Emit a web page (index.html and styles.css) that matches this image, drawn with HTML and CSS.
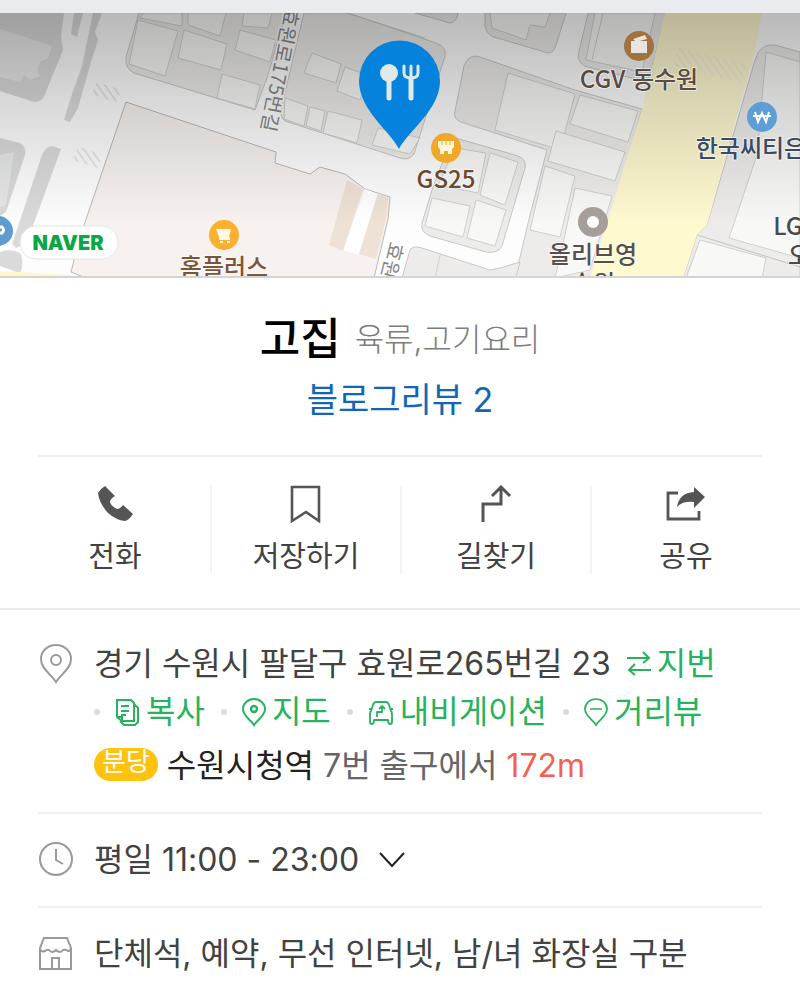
FILE: index.html
```html
<!doctype html>
<html lang="ko">
<head>
  <meta charset="utf-8" />
  <meta name="viewport" content="width=device-width,initial-scale=1" />
  <title>고집 - 장소 정보</title>
  <link rel="stylesheet" href="styles.css">
</head>

<body>
  <div class="topbar"></div>

  <div class="map">
    <svg viewBox="0 13 800 265" role="img" aria-label="고집 주변 지도">
      <defs>
        <linearGradient id="shade" x1="0" y1="0" x2="0" y2="1">
          <stop offset="0" stop-color="#000" stop-opacity=".27" />
          <stop offset=".35" stop-color="#000" stop-opacity=".14" />
          <stop offset=".8" stop-color="#000" stop-opacity="0" />
        </linearGradient>
        <pattern id="walk" width="6" height="6" patternUnits="userSpaceOnUse" patternTransform="rotate(-35)">
          <path d="M0 0V6" stroke="#e6e8e7" stroke-width="4" />
        </pattern>
      </defs>
      <rect y="13" width="800" height="265" fill="#fdfdfd" />

      <!-- 왼쪽 블록, 중앙분리대 -->
      <g fill="#dadada">
        <path d="M0 13H64L61 36L63 50L45 94Q42 103 34 102L0 91Z" />
        <path d="M74 13H83L77 37L71 34Z" />
        <path d="M93 13H102L95 32L98 40L91 62L78 108L70 122L64 120L71 97L82 66Z" />
        <path d="M0 138L20 143Q27 147 25 155L6 212L0 216Z" />
        <path d="M42 155Q45 147 52 146L61 149L27 242L16 248L12 244Z" />
        <path d="M0 252Q10 248 20 253Q25 262 20 273L0 266Z" />
      </g>
      <path d="M0 29L52 46L48 58L40 62L37 70L40 76L30 80L24 75L20 82L0 77Z" fill="#e9e9e9" />
      <path d="M0 155L14 152L6 205L0 207Z" fill="#e6e7e7" />
      <path d="M0 271L70 275L76 278H0Z" fill="#fff7ca" />
      <path d="M97 82L122 90L116 103L92 94ZM78 146L102 155L98 168L73 160Z" fill="url(#walk)" />

      <!-- 홈플러스 부지 -->
      <path d="M126 102L276 152L275 163L310 174L320 167L345 174L365 189L390 197L388 219L374 278H86L71 272L80 237Z" fill="#f7f2ef" stroke="#bbb8b6" />
      <path d="M365 189L378 194L359 255L343 250Z" fill="#fff" />
      <path d="M347 180L363 189L343 251L329 245ZM378 193L388 197L387 215L376 259L359 254Z" fill="#eee1d5" />

      <!-- 주거 블록 -->
      <g fill="#edecea" stroke="#c8c8c6">
        <path d="M139 13L126 57Q125 69 134 73L255 110L268 75L286 13Z" />
        <path d="M304 13H348L436 43Q447 47 445 56L414 154Q409 161 400 158L285 121Q279 117 282 105Z" />
        <path d="M415 13L450 23Q457 22 458 13Z" />
        <path d="M485 13V26Q487 35 494 37L548 53Q554 53 556 45L566 13Z" />
        <path d="M588 13L578 56Q579 64 587 67L648 82L666 13Z" />
        <path d="M480 57L575 90L642 109L594 278H515L530 215L547 150L461 122Q453 119 455 111L464 66Q469 53 480 57Z" />
        <path d="M452 137L515 155Q527 158 525 168L502 246Q498 254 486 252L430 236Q420 232 422 223L432 190Z" />
        <path d="M410 250Q413 245 422 248L490 270L500 268L520 262L516 278H402Z" />
        <path d="M755 60Q760 43 775 45L800 52V267L697 235L707 225Z" />
        <path d="M697 235L800 267V278H683Z" />
      </g>
      <g fill="#f8f8f7" stroke="#d0d0ce">
        <path d="M138 20L178 31L165 76L129 64Z" />
        <path d="M144 13H182V26L140 18ZM188 13H226L220 36L188 25ZM244 13H272L268 28L242 26Z" />
        <path d="M184 30L227 44L221 70L178 58ZM240 30L276 40L270 62L235 50ZM222 74L260 85L255 109L217 98Z" />
        <path d="M312 53L341 64L336 83L304 73ZM345 67L370 76L360 100L337 91Z" />
        <path d="M285 98L308 106L304 126L284 119ZM310 107L325 111L321 131L306 126ZM328 111L362 120L357 143L323 133Z" />
        <path d="M378 128L420 138L410 154L372 145Z" />
        <path d="M508 73L575 94L560 150L495 130Z" />
        <path d="M490 13H550L545 27L530 25L526 40L492 28Z" />
        <path d="M595 13H655L642 72L586 60Z" />
        <path d="M580 95L638 111L628 142L570 124ZM556 131L625 152L615 181L548 161Z" />
        <path d="M545 166L575 176L560 237L530 230ZM575 188L612 196L590 270L555 278L565 235Z" />
        <path d="M490 153L518 162L505 205L480 195ZM455 148L486 153L478 193L438 185ZM432 198L470 206L463 237L425 226ZM476 200L506 210L495 246L467 238Z" />
        <path d="M766 52L800 62V258L729 238L757 155Z" />
        <path d="M700 240L766 258L762 278H686Z" />
      </g>
      <path d="M347 13L425 38M440 255L435 278M603 13L592 60" fill="none" stroke="#cfcfcd" />

      <!-- 큰 도로 -->
      <path d="M665 13H762L754 54L707 225L697 235L683 278H590L642 109Z" fill="#fff9d0" />
      <path d="M678 48L748 64L741 82L672 66Z" fill="url(#walk)" opacity=".5" />

      <g class="road-name">
        <text transform="translate(285 7) rotate(101)">효원로175번길</text>
        <text transform="translate(390 241) rotate(104)">효원로</text>
      </g>

      <rect y="13" width="800" height="265" fill="url(#shade)" />

      <!-- 상호 -->
      <circle cx="639" cy="46" r="15" fill="#a1713f" />
      <path d="M631 41H647V53H631ZM633 39L645 35L647 39L636 42Z" fill="#e9e4dd" />
      <circle cx="446" cy="148" r="15" fill="#f0a828" />
      <path d="M438 141H454V147L452 149V154H448V151H444V154H440V149L438 147Z" fill="#fff4dc" />
      <path d="M442 141V145M446 141V145M450 141V145" stroke="#f0a828" />
      <circle cx="224" cy="235" r="15" fill="#fbb02f" />
      <path d="M216 229H231L229 237H219ZM219 237H230V240H219ZM220 241H223V243H220ZM227 241H230V243H227Z" fill="#fff8e8" />
      <circle cx="762" cy="117" r="15" fill="#5c9ed5" />
      <path d="M755 112L758 122L762 113L766 122L769 112M753 116H771" fill="none" stroke="#fff" stroke-width="2" />
      <circle cx="593" cy="222" r="15" fill="#a59e99" />
      <circle cx="593" cy="222" r="6" fill="#fff" />
      <circle cx="-2" cy="231" r="15" fill="#5d9bd0" />
      <path d="M-4 227H2Q5 230 2 233H-4" fill="none" stroke="#fff" stroke-width="3" />

      <g class="place-name">
        <text x="639" y="88" fill="#574b43">CGV 동수원</text>
        <text x="446" y="188" fill="#6a4a2e">GS25</text>
        <text x="224" y="276" fill="#7a5636">홈플러스</text>
        <text x="593" y="263" fill="#55504c">올리브영</text>
        <text x="593" y="292" fill="#55504c">수원</text>
        <text x="762" y="157" fill="#3a4b61">한국씨티은행</text>
        <text x="810" y="235" fill="#4b4b4b">LG전자</text>
        <text x="810" y="264" fill="#4b4b4b">오산</text>
      </g>

      <rect x="20" y="226" width="98" height="33" rx="16" fill="#fff" stroke="#e3e5e5" />
      <text x="68" y="250" class="naver">NAVER</text>

      <!-- 핀 -->
      <path d="M399 149C391 132 359 110 359 81A40 40 0 0 1 440 81C440 110 407 132 399 149Z" fill="#0482dc" />
      <circle cx="389" cy="73" r="9" fill="#dfe9ec" />
      <path d="M389 78V98M411 79V98" stroke="#dfe9ec" stroke-width="5" stroke-linecap="round" />
      <path d="M404 66V73Q404 78 411 78Q418 78 418 73V66M411 66V78" fill="none" stroke="#dfe9ec" stroke-width="3" stroke-linecap="round" />
      <path d="M0 277H800" stroke="#d4d4d2" stroke-width="2" />
    </svg>
  </div>

  <header class="head">
    <h1>고집 <span class="category">육류,고기요리</span></h1>
    <a class="review" href="#review">블로그리뷰 2</a>
  </header>

  <nav class="actions">
    <a href="#call">
      <svg width="38" height="38" viewBox="0 0 38 38"><path d="M9 1L19 11Q14 14 14 17Q15 21 21 24Q24 24 27 20L37 29Q33 35 29 36Q20 35 12 28Q3 18 2 8Q4 4 9 1Z" fill="#555" /></svg>
      전화
    </a>
    <a href="#save">
      <svg width="38" height="38" viewBox="0 0 38 38"><path d="M5 2H32V36L19 27L5 36Z" fill="none" stroke="#555" stroke-width="2.6" /></svg>
      저장하기
    </a>
    <a href="#route">
      <svg width="38" height="38" viewBox="0 0 38 38"><path d="M6 37V19H24V3M15 11L24 2L33 11" fill="none" stroke="#555" stroke-width="3" /></svg>
      길찾기
    </a>
    <a href="#share">
      <svg width="40" height="38" viewBox="0 0 40 38"><path d="M12 8H2V34H33V26" fill="none" stroke="#555" stroke-width="2.8" /><path d="M28 2L39 12L28 23V17Q16 16 11 22Q13 8 28 7Z" fill="#555" /></svg>
      공유
    </a>
  </nav>

  <main class="info">
    <section class="row place">
      <svg class="row-icon" width="36" height="40" viewBox="0 0 36 40"><path d="M18 38C14 31 3 25 3 15A15 14 0 0 1 33 15C33 25 22 31 18 38Z" fill="none" stroke="#999" stroke-width="2" /><circle cx="18" cy="16" r="5" fill="none" stroke="#999" stroke-width="2" /></svg>
      <div class="row-body">
        <p class="address">
          경기 수원시 팔달구 효원로265번길 23
          <a class="green" href="#jibun"><svg width="24" height="26" viewBox="0 0 24 26"><path d="M0 7H22M16 1L22 7L16 12M24 19H2M8 13L2 19L8 24" fill="none" stroke="#27b35d" stroke-width="2" /></svg>지번</a>
        </p>
        <ul class="links">
          <li><a class="green" href="#copy"><svg width="25" height="30" viewBox="0 0 25 30"><path d="M2 3H16L19 6V24H7L2 20ZM2 20H7V24M19 7L23 11V25L20 28H9L5 24M6 9H14M6 14H14M6 18H11" fill="none" stroke="#27b35d" stroke-width="2" /></svg>복사</a></li>
          <li><a class="green" href="#map"><svg width="24" height="30" viewBox="0 0 24 30"><path d="M12 28C9 23 1 19 1 12A11 10 0 0 1 23 12C23 19 15 23 12 28Z" fill="none" stroke="#27b35d" stroke-width="2" /><circle cx="12" cy="12" r="3" fill="none" stroke="#27b35d" stroke-width="2.4" /></svg>지도</a></li>
          <li><a class="green" href="#navi"><svg width="26" height="30" viewBox="0 0 26 30"><path d="M8 5H18Q20 5 21 8L23 14Q24 15 24 17V25Q24 27 22 27Q20 27 20 23H6Q6 27 4 27Q2 27 2 25V17Q2 15 3 14L5 8Q6 5 8 5ZM1 12H4M22 12H25M9 20V15H14V9M11 12L14 9L17 12" fill="none" stroke="#27b35d" stroke-width="1.8" stroke-linejoin="round" /></svg>내비게이션</a></li>
          <li><a class="green" href="#street"><svg width="24" height="30" viewBox="0 0 24 30"><path d="M12 28C9 23 1 19 1 12A11 10 0 0 1 23 12C23 19 15 23 12 28ZM6 12H18" fill="none" stroke="#27b35d" stroke-width="1.7" /></svg>거리뷰</a></li>
        </ul>
        <p class="subway"><span class="badge">분당</span> <span class="station">수원시청역</span> 7번 출구에서 <span class="distance">172m</span></p>
      </div>
    </section>

    <section class="row">
      <svg class="row-icon" width="36" height="40" viewBox="0 0 36 40"><circle cx="18" cy="19" r="16" fill="none" stroke="#999" stroke-width="2" /><path d="M18 9V20L25 24" fill="none" stroke="#999" stroke-width="2" /></svg>
      <div class="row-body">
        <button class="hours" type="button">평일 11:00 - 23:00
          <svg width="26" height="16" viewBox="0 0 26 16"><path d="M1 1L13 14L25 1" fill="none" stroke="#222" stroke-width="2" /></svg>
        </button>
      </div>
    </section>

    <section class="row">
      <svg class="row-icon" width="36" height="40" viewBox="0 0 36 40"><path d="M2 14L6 4H29L33 14V35H2ZM2 14Q3 19 7 17Q9 15 11 16Q14 20 18 16Q22 20 25 16Q28 15 30 17Q33 17 33 14M14 35V24H21V35" fill="none" stroke="#999" stroke-width="2" /></svg>
      <div class="row-body">
        <p>단체석, 예약, 무선 인터넷, 남/녀 화장실 구분</p>
      </div>
    </section>
  </main>
</body>
</html>
```
FILE: styles.css
```css
* { box-sizing:border-box; }
body { margin:0; background:#fff; color:#424242; font-family:Inter, "Noto Sans CJK KR", sans-serif; font-size:32px; line-height:48px; }
h1, p, ul { margin:0; padding:0; }
a { color:inherit; text-decoration:none; }
svg { display:block; flex:none; }

.topbar { height:13px; background:#e9ebef; }
.map svg { width:100%; height:auto; }
.place-name { font-family:"Noto Sans CJK KR", sans-serif; font-size:24px; font-weight:500; text-anchor:middle; stroke:#fff; stroke-opacity:.5; stroke-width:2px; paint-order:stroke; }
.road-name { font-family:"Noto Sans CJK KR", sans-serif; font-size:20px; fill:#888; stroke:#fff; stroke-width:3px; paint-order:stroke; }
.naver { font-size:20px; font-weight:900; fill:#0aa648; text-anchor:middle; }

.head { margin:0 38px; padding:30px 0 25px; text-align:center; border-bottom:2px solid #eff0f1; }
h1 { display:flex; align-items:center; justify-content:center; gap:14px; font-size:44px; line-height:60px; font-weight:500; color:#000; }
.category { padding-top:2px; font-size:32px; font-weight:300; color:#7c7c7c; }
.review { display:block; font-size:34px; line-height:60px; color:#1266b3; }

.actions { display:grid; grid-template-columns:repeat(4, 1fr); padding:28px 20px 35px; border-bottom:2px solid #e9ebee; }
.actions a { display:flex; flex-direction:column; align-items:center; gap:12px; height:88px; font-size:29px; line-height:44px; }
.actions a + a { border-left:2px solid #f4f4f4; }

.info { padding:0 38px; }
.row { display:flex; gap:20px; padding:22px 0; }
.row + .row { border-top:2px solid #eef0f5; }
.row-icon { margin-top:4px; }
.row-body { flex:1; min-width:0; }
.place { padding:30px 0 22px; }
.green { display:inline-flex; align-items:center; gap:6px; color:#27b35d; }
.address { display:flex; align-items:center; gap:16px; white-space:nowrap; }
.links { display:flex; list-style:none; white-space:nowrap; }
.links li { display:flex; align-items:center; }
.links li::before { content:""; width:6px; height:6px; margin-right:15px; border-radius:50%; background:#dcdcdc; }
.links li + li::before { margin-left:16px; }
.subway { display:flex; align-items:center; gap:9px; margin-top:6px; color:#666; }
.badge { height:33px; margin-bottom:4px; padding:0 8px; border-radius:17px; background:#ffc20e; color:#fff; font-size:26px; line-height:28px; }
.station { color:#222; }
.distance { color:#f4604f; }
.hours { display:flex; align-items:center; gap:20px; padding:0; border:0; background:none; color:inherit; font:inherit; }
```
